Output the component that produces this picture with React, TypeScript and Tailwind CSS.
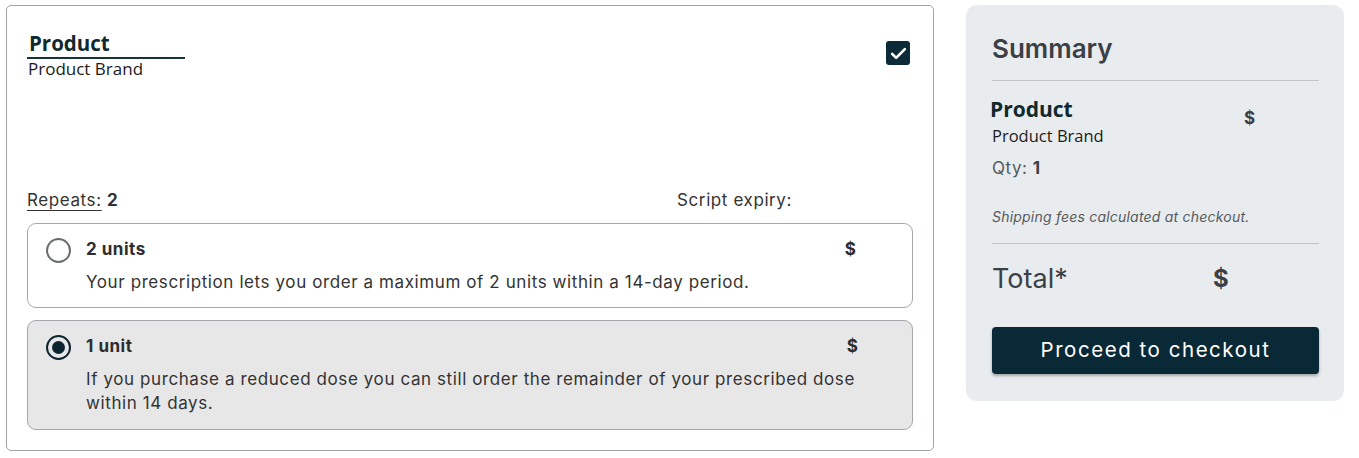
import React from "react";

const sans = "font-['Inter','Roboto',sans-serif]";
const brand = "font-['Open_Sans','Noto_Sans',sans-serif]";

function Radio({ checked }: { checked: boolean }) {
  return (
    <span
      className={`flex h-[25px] w-[25px] shrink-0 items-center justify-center rounded-full ${
        checked ? "border-[2.5px] border-[#0c2330]" : "border-2 border-[#6b6e70]"
      }`}
    >
      {checked && <span className="h-[13px] w-[13px] rounded-full bg-[#0c2330]" />}
    </span>
  );
}

interface OptionProps {
  title: string;
  text: string;
  checked: boolean;
}

function Option({ title, text, checked }: OptionProps) {
  return (
    <div
      className={`rounded-[9px] border border-[#a3a8ab] pl-[18px] pr-[52px] pt-[13px] ${
        checked ? "bg-[#e7e7e7] pb-[14px]" : "bg-white pb-[13px]"
      }`}
    >
      <div className="flex h-[26px] items-center">
        <Radio checked={checked} />
        <div className="ml-[15px] flex flex-1 items-center justify-between">
          <span className="text-[17px] font-bold tracking-[0.03em] text-[#2d2d2d]">{title}</span>
          <span className={`text-[17px] font-bold text-[#2d2d2d] ${checked ? "mr-[2px]" : "mr-[4px]"}`}>$</span>
        </div>
      </div>
      <p className="mt-[7px] pl-[40px] text-[17px] leading-[24px] tracking-[0.035em] text-[#333]">{text}</p>
    </div>
  );
}

export default function App() {
  return (
    <div className={`flex min-h-[458px] items-start bg-white pl-[6px] pt-[5px] ${sans}`}>
      {/* Product card */}
      <div className="flex h-[446px] w-[928px] flex-col rounded-[5px] border border-[#9ea3a6] px-[20px] pb-[20px]">
        <div className="flex items-start justify-between pr-[3px] pt-[24px]">
          <div className={brand}>
            <div className="w-[158px] border-b-2 border-[#163236] pl-[2px] text-[20.5px] font-bold leading-[27px] text-[#10292c]">
              Product
            </div>
            <div className="pl-[1px] text-[17px] leading-[20px] text-[#1b1b1b]">Product Brand</div>
          </div>
          <span className="mt-[11px] flex h-[24px] w-[24px] items-center justify-center rounded-[3px] bg-[#0d2a38]">
            <svg width="19" height="19" viewBox="0 0 24 24" fill="none" stroke="white" strokeWidth="3.4" strokeLinecap="round" strokeLinejoin="round">
              <path d="M4 12.5l5 5L20 6.5" />
            </svg>
          </span>
        </div>

        <div className="mt-auto">
          <div className="flex h-[22px] items-center justify-between pr-[121px] text-[17px] tracking-[0.035em] text-[#333]">
            <span>
              <span className="underline decoration-1 underline-offset-[4px]">Repeats:</span>{" "}
              <span className="font-bold">2</span>
            </span>
            <span>Script expiry:</span>
          </div>
          <div className="mt-[11px] flex flex-col gap-[12px]">
            <Option
              title="2 units"
              checked={false}
              text="Your prescription lets you order a maximum of 2 units within a 14-day period."
            />
            <Option
              title="1 unit"
              checked={true}
              text="If you purchase a reduced dose you can still order the remainder of your prescribed dose within 14 days."
            />
          </div>
        </div>
      </div>

      {/* Summary card */}
      <div className="ml-[32px] w-[378px] rounded-[11px] bg-[#e9ecee] pl-[26px] pr-[25px] pt-[29px] pb-[27px]">
        <h2 className="text-[26px] font-semibold leading-[30px] text-[#3b4046]">Summary</h2>
        <div className="mt-[16px] border-t border-[#c3c6c9]" />
        <div className="mt-[15px] flex items-start">
          <div className={`w-[252px] ${brand}`}>
            <div className="ml-[-2px] text-[21px] font-bold leading-[26px] text-[#10292c]">Product</div>
            <div className="mt-[4px] text-[16.5px] leading-[20px] text-[#1b1b1b]">Product Brand</div>
          </div>
          <span className="mt-[10px] text-[17px] font-bold text-[#3b4046]">$</span>
        </div>
        <div className="mt-[12px] text-[17px] leading-[20px] tracking-[0.03em] text-[#555a5e]">
          Qty: <span className="font-bold text-[#3b4046]">1</span>
        </div>
        <p className="mt-[30px] text-[14px] italic leading-[18px] tracking-[0.015em] text-[#555a5e]">
          Shipping fees calculated at checkout.
        </p>
        <div className="mt-[17px] border-t border-[#c3c6c9]" />
        <div className="mt-[17px] flex items-center text-[#3b4046]">
          <span className="w-[221px] text-[27px] leading-[34px]">Total*</span>
          <span className="text-[24px] font-bold">$</span>
        </div>
        <button className="mt-[30px] h-[47px] w-full rounded-[4px] bg-[#0a2937] text-[20.5px] tracking-[0.075em] text-white shadow-[0_2px_3px_rgba(0,0,0,0.3)]">
          Proceed to checkout
        </button>
      </div>
    </div>
  );
}
